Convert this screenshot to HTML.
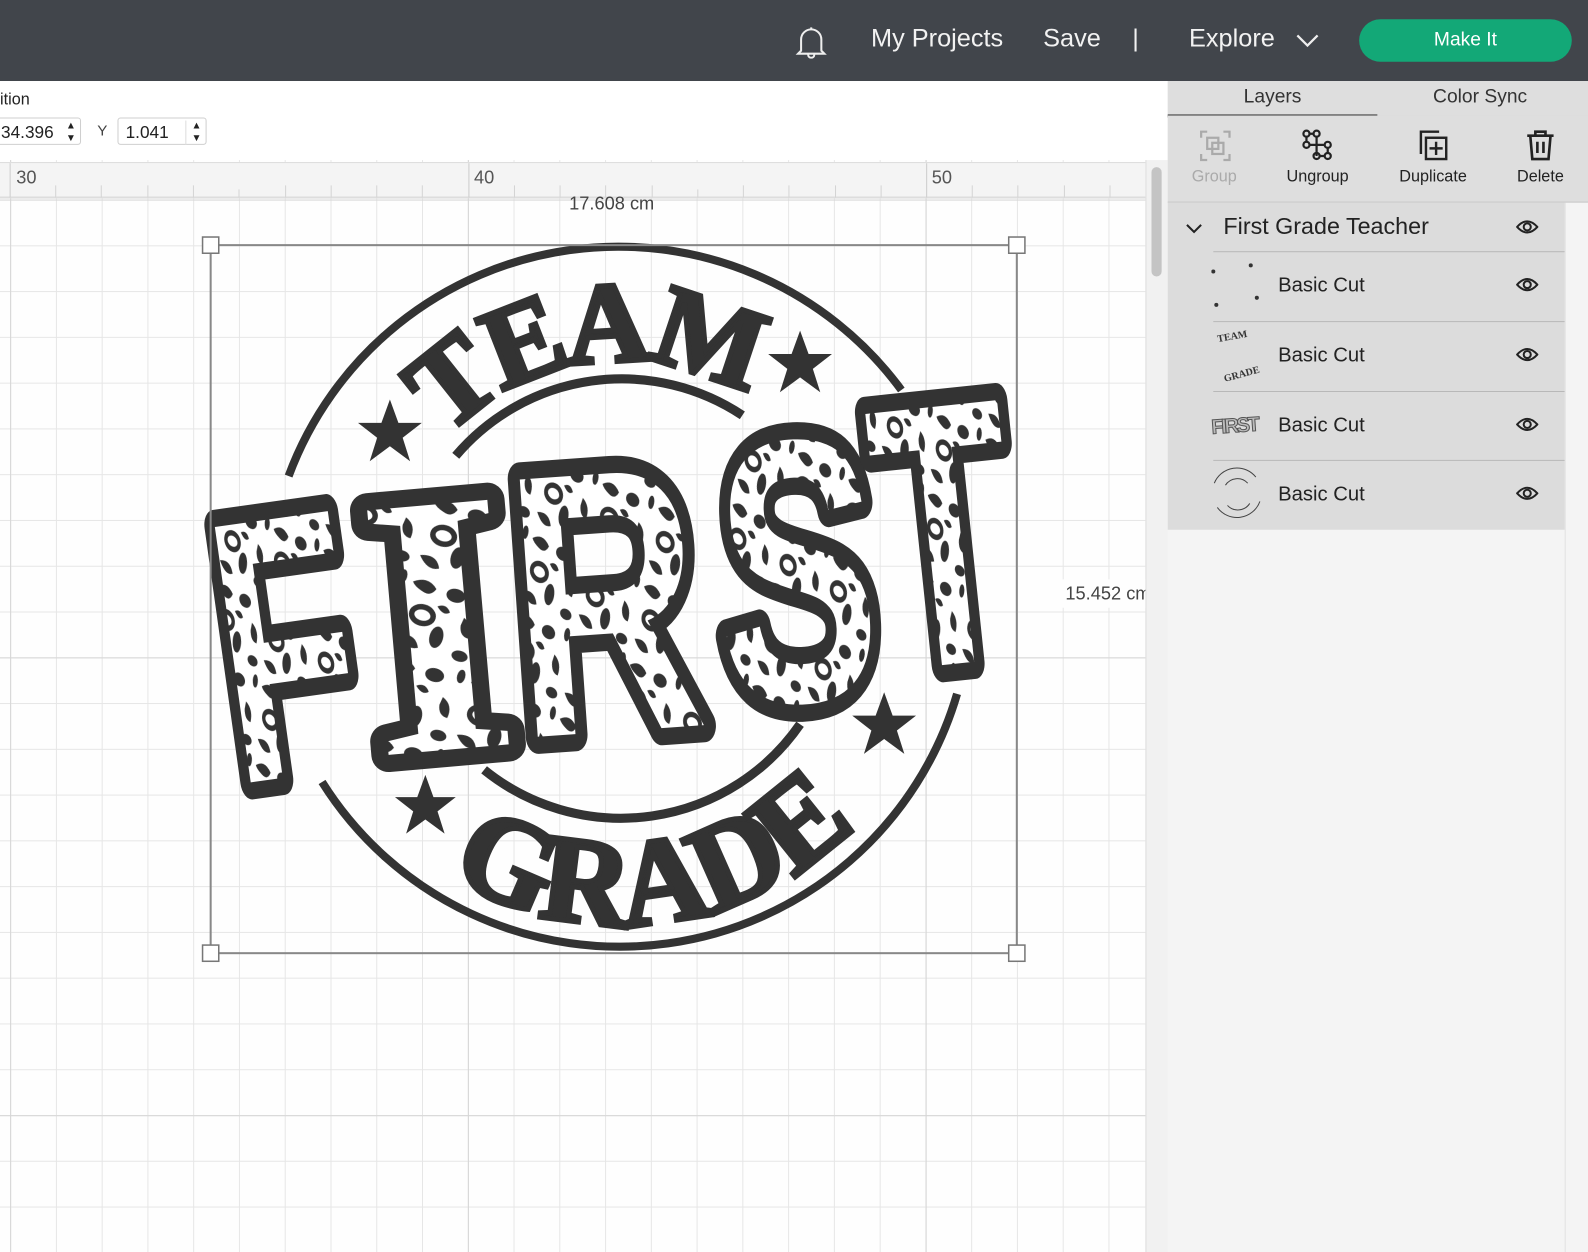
<!DOCTYPE html>
<html><head><meta charset="utf-8">
<style>
html,body{margin:0;padding:0;width:1588px;height:1252px;overflow:hidden;background:#fff}
#w{position:absolute;left:0;top:0;width:1568px;height:1236px;transform:scale(1.01276,1.01294);transform-origin:0 0;font-family:"Liberation Sans",sans-serif;color:#222}
.top{position:absolute;left:0;top:0;width:1568px;height:80px;background:#41454b;color:#f2f2f2;font-size:25px}
.top span{position:absolute;top:24px}
.btn{position:absolute;left:1342px;top:19px;width:210px;height:42px;border-radius:21px;background:#13a877;color:#fff;font-size:19px;text-align:center;line-height:42px}
.props{position:absolute;left:0;top:80px;width:1153px;height:78px;background:#fff}
.inp{position:absolute;top:116px;height:27px;border:1px solid #cfcfcf;border-radius:3px;font-size:17px;line-height:27px;box-sizing:border-box}
.canvas{position:absolute;left:0;top:158px;width:1131px;height:1078px;background-color:#fefefe;
background-image:linear-gradient(#d6d6d6 1px,transparent 1px),linear-gradient(90deg,#d6d6d6 1px,transparent 1px),linear-gradient(#e6e6e6 1px,transparent 1px),linear-gradient(90deg,#e6e6e6 1px,transparent 1px);
background-size:452px 452px,452px 452px,45.2px 45.2px,45.2px 45.2px;background-position:0 39px,10px 0,0 39px,10px 0}
.ruler{position:absolute;left:0;top:160px;width:1131px;height:36px;background:#f4f4f4;border-top:1px solid #ddd;border-bottom:2px solid #ddd;box-sizing:border-box}
.panel{position:absolute;left:1153px;top:80px;width:415px;height:1156px;background:#f4f4f4}
.tabs{position:absolute;left:0;top:0;width:415px;height:34px;background:#dedede;border-bottom:2px solid #bcbcbc}
.tool{position:absolute;top:34px;left:0;width:415px;height:85px;background:#dedede;border-bottom:1px solid #c6c6c6}
.tool span{position:absolute;top:52px;font-size:16px;color:#222;transform:translateX(-50%)}
.list{position:absolute;left:0;top:120px;width:392px;height:323px;background:#dcdcdc}
.row{position:absolute;left:45px;width:347px;height:68px;border-top:1px solid #b8b8b8}
.row .t{position:absolute;left:64px;top:22px;font-size:20px}
.eye{position:absolute;right:26px;top:24px}
</style></head><body><div id="w">
<div class="top">
<svg style="position:absolute;left:785px;top:24px" width="32" height="34" viewBox="0 0 32 34"><path d="M6 26 V15 a10 10 0 0 1 20 0 V26 L29 29 H3 Z M16 3 V5 M13 30 a3 3 0 0 0 6 0" fill="none" stroke="#eee" stroke-width="2"/></svg>
<span style="left:860px">My Projects</span><span style="left:1030px">Save</span><span style="left:1118px">|</span><span style="left:1174px">Explore</span>
<svg style="position:absolute;left:1279px;top:32px" width="24" height="16"><path d="M2 3 L12 13 L22 3" fill="none" stroke="#eee" stroke-width="2.2"/></svg>
<div class="btn">Make It</div>
</div>
<div class="props">
<div style="position:absolute;left:0;top:10px;font-size:16px">ition</div>
</div>
<div class="inp" style="left:-4px;width:84px;padding-left:4px">34.396<span style="position:absolute;right:4px;top:0;font-size:10px;line-height:12px;top:2px">▲<br>▼</span></div>
<div style="position:absolute;left:96px;top:121px;font-size:15px;color:#444">Y</div>
<div class="inp" style="left:116px;width:88px;padding-left:7px">1.041<span style="position:absolute;right:4px;top:2px;font-size:10px;line-height:12px;border-left:1px solid #ddd;padding-left:5px">▲<br>▼</span></div>
<div class="canvas"></div>
<div class="ruler">
<svg width="1131" height="34" style="position:absolute;left:0;top:0"><g stroke="#ccc"><path d="M10 0V34M463 0V34M915 0V34"/></g><g stroke="#d4d4d4"><path d="M55 22V34M100 22V34M146 22V34M191 22V34M236 26V34M282 22V34M327 22V34M372 22V34M417 22V34M508 22V34M553 22V34M598 22V34M644 22V34M689 26V34M734 22V34M779 22V34M825 22V34M870 22V34M960 22V34M1005 22V34M1051 22V34M1096 22V34"/></g>
<g font-size="18" fill="#555" font-family="Liberation Sans"><text x="16" y="20">30</text><text x="468" y="20">40</text><text x="920" y="20">50</text></g></svg>
</div>
<div style="position:absolute;left:1131px;top:158px;width:22px;height:1078px;background:#f1f1f1;border-left:1px solid #ddd"></div>
<div style="position:absolute;left:1137px;top:165px;width:10px;height:108px;border-radius:5px;background:#c4c4c4"></div>
<svg style="position:absolute;left:0;top:0" width="1131" height="1236">
<defs>
<pattern id="leo" width="60" height="60" patternUnits="userSpaceOnUse" patternTransform="rotate(20) scale(1.35)">
<rect width="60" height="60" fill="#fff"/>
<g fill="#333"><path d="M3 8 q10 -7 18 1 q-3 7 -10 4 q-6 -2 -8 -5z"/><ellipse cx="36" cy="10" rx="7" ry="5"/><path d="M46 24 q9 4 7 14 q-7 0 -8 -8z"/><ellipse cx="16" cy="30" rx="8" ry="6" fill="none" stroke="#333" stroke-width="4"/><ellipse cx="30" cy="43" rx="5" ry="8"/><path d="M3 48 q12 -4 16 6 q-8 4 -16 -6z"/><ellipse cx="50" cy="52" rx="6" ry="4"/><path d="M25 21 q6 -4 10 2 q-4 4 -10 -2z"/><ellipse cx="55" cy="6" rx="3" ry="5"/></g>
</pattern>
</defs>
<g fill="none" stroke="#333">
<path d="M285 470 A347 347 0 0 1 890 385" stroke-width="8"/>
<path d="M318 772 A347 347 0 0 0 945 685" stroke-width="8"/>
<path d="M450 450 A215 215 0 0 1 733 410" stroke-width="9"/>
<path d="M478 760 A215 215 0 0 0 790 715" stroke-width="9"/>
</g>
<path id="tp" d="M379 591 A234 234 0 0 1 847 591" fill="none"/>
<path id="bp" d="M291 591 A322 322 0 0 0 935 591" fill="none"/>
<text font-family="Liberation Serif" font-weight="bold" font-size="114" fill="#333" stroke="#333" stroke-width="5" letter-spacing="-6"><textPath href="#tp" startOffset="45.5%" text-anchor="middle">TEAM</textPath></text>
<text font-family="Liberation Serif" font-weight="bold" font-size="122" fill="#333" stroke="#333" stroke-width="5" letter-spacing="-1"><textPath href="#bp" startOffset="54%" text-anchor="middle">GRADE</textPath></text>
<g fill="#333">
<polygon transform="translate(385,428) scale(1.05)" points="0,-32 8,-10 30,-10 12,4 19,26 0,12 -19,26 -12,4 -30,-10 -8,-10"/>
<polygon transform="translate(790,360) scale(1.05)" points="0,-32 8,-10 30,-10 12,4 19,26 0,12 -19,26 -12,4 -30,-10 -8,-10"/>
<polygon transform="translate(420,797) scale(1.0)" points="0,-32 8,-10 30,-10 12,4 19,26 0,12 -19,26 -12,4 -30,-10 -8,-10"/>
<polygon transform="translate(873,717) scale(1.05)" points="0,-32 8,-10 30,-10 12,4 19,26 0,12 -19,26 -12,4 -30,-10 -8,-10"/>
</g>
<g font-family="Liberation Sans" font-weight="bold" font-size="370" text-anchor="middle" stroke-linejoin="round">
<g fill="#333" stroke="#333" stroke-width="34">
<text transform="translate(300,765) rotate(-8) scale(0.6,1)">F</text>
<text transform="translate(443,740) rotate(-5) scale(1.0,1)" font-family="Liberation Serif">I</text>
<text transform="translate(607,722) rotate(-4) scale(0.7,1)">R</text>
<text transform="translate(792,692) rotate(-2) scale(0.64,1)">S</text>
<text transform="translate(946,655) rotate(-6) scale(0.6,1)">T</text>
</g>
<g fill="url(#leo)">
<text transform="translate(300,765) rotate(-8) scale(0.6,1)">F</text>
<text transform="translate(443,740) rotate(-5) scale(1.0,1)" font-family="Liberation Serif">I</text>
<text transform="translate(607,722) rotate(-4) scale(0.7,1)">R</text>
<text transform="translate(792,692) rotate(-2) scale(0.64,1)">S</text>
<text transform="translate(946,655) rotate(-6) scale(0.6,1)">T</text>
</g>
</g>
<rect x="208" y="242" width="796" height="699" fill="none" stroke="#888" stroke-width="2"/>
<g fill="#fff" stroke="#777" stroke-width="1.5"><rect x="200" y="234" width="16" height="16"/><rect x="996" y="234" width="16" height="16"/><rect x="200" y="933" width="16" height="16"/><rect x="996" y="933" width="16" height="16"/></g>
<rect x="1045" y="572" width="86" height="28" fill="#fefefe"/>
<text x="1052" y="592" font-family="Liberation Sans" font-size="18" fill="#444">15.452 cm</text>
<text x="562" y="207" font-family="Liberation Sans" font-size="18" fill="#444">17.608 cm</text>
</svg>
<div class="panel">
<div class="tabs"><span style="position:absolute;left:75px;top:5px;font-size:19px;color:#333">Layers</span><span style="position:absolute;left:262px;top:5px;font-size:19px;color:#333">Color Sync</span><div style="position:absolute;left:0;bottom:-2px;width:207px;height:3px;background:#333"></div></div>
<div class="tool">
<svg style="position:absolute;left:31px;top:14px" width="32" height="32" viewBox="0 0 32 32" fill="none" stroke="#aaa" stroke-width="2.2"><path d="M2 8V2H8M24 2H30V8M30 24V30H24M8 30H2V24"/><rect x="8" y="8" width="11" height="11"/><rect x="13" y="13" width="11" height="11"/></svg>
<span style="left:46px;color:#aaa">Group</span>
<svg style="position:absolute;left:131px;top:13px" width="32" height="32" viewBox="0 0 32 32" fill="none" stroke="#222" stroke-width="2.2"><circle cx="6" cy="5" r="3"/><circle cx="16" cy="5" r="3"/><circle cx="6" cy="16" r="3"/><circle cx="27" cy="16" r="3"/><circle cx="16" cy="27" r="3"/><circle cx="27" cy="27" r="3"/><path d="M9 5H13M6 8V13M16 8V27M9 16H24M19 27H24M27 19V24"/></svg>
<span style="left:148px">Ungroup</span>
<svg style="position:absolute;left:246px;top:14px" width="32" height="32" viewBox="0 0 32 32" fill="none" stroke="#222" stroke-width="2.4"><path d="M4 24V2H22"/><rect x="9" y="8" width="20" height="21"/><path d="M19 12V25M12.5 18.5H25.5"/></svg>
<span style="left:262px">Duplicate</span>
<svg style="position:absolute;left:352px;top:13px" width="32" height="32" viewBox="0 0 32 32" fill="none" stroke="#222" stroke-width="2.6"><path d="M3 7H29M11 7V3H21V7M6 7L8 30H24L26 7M13 13V24M19 13V24"/></svg>
<span style="left:368px">Delete</span>
</div>
<div class="list">
<svg style="position:absolute;left:18px;top:20px" width="16" height="12"><path d="M1 2L8 9L15 2" fill="none" stroke="#222" stroke-width="2"/></svg>
<div style="position:absolute;left:55px;top:10px;font-size:23px;color:#222">First Grade Teacher</div>
<svg class="eye" style="right:26px;top:16px;position:absolute" width="22" height="16" viewBox="0 0 22 16"><path d="M1 8 Q11 -3 21 8 Q11 19 1 8Z" fill="none" stroke="#222" stroke-width="2"/><circle cx="11" cy="8" r="3.5" fill="none" stroke="#222" stroke-width="2"/></svg>
<div class="row" style="top:48px">
<svg style="position:absolute;left:-2px;top:8px" width="50" height="50"><g fill="#333"><circle cx="2" cy="11" r="2"/><circle cx="39" cy="5" r="2"/><circle cx="5" cy="44" r="2"/><circle cx="45" cy="37" r="2"/></g></svg>
<div class="t">Basic Cut</div>
<svg class="eye" width="22" height="16" viewBox="0 0 22 16"><path d="M1 8 Q11 -3 21 8 Q11 19 1 8Z" fill="none" stroke="#222" stroke-width="2"/><circle cx="11" cy="8" r="3.5" fill="none" stroke="#222" stroke-width="2"/></svg></div>
<div class="row" style="top:117px">
<svg style="position:absolute;left:-2px;top:6px" width="50" height="56"><g font-family="Liberation Serif" font-weight="bold" font-size="10" fill="#333"><text x="6" y="12" transform="rotate(-10 16 10)">TEAM</text><text x="12" y="50" transform="rotate(-15 24 46)">GRADE</text></g></svg>
<div class="t">Basic Cut</div>
<svg class="eye" width="22" height="16" viewBox="0 0 22 16"><path d="M1 8 Q11 -3 21 8 Q11 19 1 8Z" fill="none" stroke="#222" stroke-width="2"/><circle cx="11" cy="8" r="3.5" fill="none" stroke="#222" stroke-width="2"/></svg></div>
<div class="row" style="top:186px">
<svg style="position:absolute;left:-2px;top:18px" width="52" height="30"><text x="0" y="22" font-family="Liberation Sans" font-weight="bold" font-size="20" fill="#bbb" stroke="#555" stroke-width="1" transform="rotate(-4 20 14)" textLength="48">FIRST</text></svg>
<div class="t">Basic Cut</div>
<svg class="eye" width="22" height="16" viewBox="0 0 22 16"><path d="M1 8 Q11 -3 21 8 Q11 19 1 8Z" fill="none" stroke="#222" stroke-width="2"/><circle cx="11" cy="8" r="3.5" fill="none" stroke="#222" stroke-width="2"/></svg></div>
<div class="row" style="top:254px">
<svg style="position:absolute;left:-2px;top:6px" width="52" height="54" viewBox="0 0 52 54" fill="none" stroke="#444" stroke-width="1"><path d="M3 16 A24 24 0 0 1 44 10"/><path d="M6 40 A24 24 0 0 0 48 34"/><path d="M14 18 A14 14 0 0 1 36 16"/><path d="M16 38 A14 14 0 0 0 38 36"/></svg>
<div class="t">Basic Cut</div>
<svg class="eye" width="22" height="16" viewBox="0 0 22 16"><path d="M1 8 Q11 -3 21 8 Q11 19 1 8Z" fill="none" stroke="#222" stroke-width="2"/><circle cx="11" cy="8" r="3.5" fill="none" stroke="#222" stroke-width="2"/></svg></div>
</div>
<div style="position:absolute;left:392px;top:120px;width:1px;height:1036px;background:#e2e2e2"></div>
</div>
</div></body></html>
